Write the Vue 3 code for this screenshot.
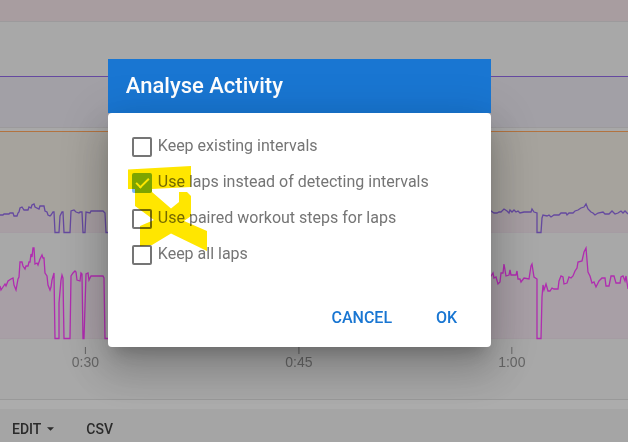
<template>
  <div class="page">
    <main class="charts">
      <svg class="plots" viewBox="0 0 628 345" preserveAspectRatio="none" aria-hidden="true">
        <rect class="band-rose" x="0" y="0" width="628" height="21" />
        <path class="rule" d="M0 21.5H628" />
        <rect class="band-lilac" x="0" y="77" width="628" height="50" />
        <path class="rule" d="M0 127.5H628" />
        <path class="line-purple" d="M0 76.5H628" />
        <rect class="band-sand" x="0" y="132" width="628" height="101" />
        <path class="line-orange" d="M0 131.5H628" />
        <path class="rule" d="M0 232.5H628M0 338.5H628" />
        <g v-for="line in lines" :key="line.name">
          <path class="area" :d="areaPath(line)" />
          <polyline :class="['trace', line.name]" :points="line.points" />
        </g>
      </svg>
      <svg class="axis">
        <g v-for="tick in ticks" :key="tick.label">
          <line :x1="tick.x" :x2="tick.x" y1="2" y2="9" />
          <text :x="tick.x" y="22">{{ tick.label }}</text>
        </g>
      </svg>
    </main>
    <footer class="toolbar">
      <button type="button">
        EDIT
        <svg class="caret" viewBox="0 0 8 4" aria-hidden="true"><path d="M0 0H8L4 4Z" /></svg>
      </button>
      <button type="button">CSV</button>
    </footer>

    <div v-if="open" class="overlay">
      <div class="dialog" role="dialog" aria-labelledby="dialog-title">
        <h1 id="dialog-title">Analyse Activity</h1>
        <form class="card" @submit.prevent="open = false">
          <label v-for="option in options" :key="option.label" class="option">
            <input v-model="option.checked" type="checkbox" />
            <span>{{ option.label }}</span>
          </label>
          <div class="actions">
            <button type="button" @click="open = false">CANCEL</button>
            <button type="submit">OK</button>
          </div>
          <svg class="marker" viewBox="128 166 80 86" aria-hidden="true">
            <path
              d="M128 169.5L191 166V187L152 189V192L171 208.5L179 202V192H187L191 196V216L184 221L207 231V251L171 233.5L152 245L140 246V226L154 220L135 206V189H128Z"
            />
          </svg>
        </form>
      </div>
    </div>
  </div>
</template>

<script setup>
import { ref } from 'vue'

const open = ref(true)

const options = ref([
  { label: 'Keep existing intervals', checked: false },
  { label: 'Use laps instead of detecting intervals', checked: true },
  { label: 'Use paired workout steps for laps', checked: false },
  { label: 'Keep all laps', checked: false }
])

const ticks = [
  { label: '0:30', x: '13.6%' },
  { label: '0:45', x: '47.6%' },
  { label: '1:00', x: '81.5%' }
]

const lines = [
  {
    name: 'power',
    base: 233,
    points:
      '0,215 3,215 4,214 9,214 10,213 13,213 14,216 17,216 18,213 19,212 20,208 22,207 24,210 28,210 29,207 31,208 32,205 34,204 35,207 39,209 40,206 44,206 45,211 47,212 48,215 50,216 51,215 53,212 54,212 55,232.5 59,232.5 60,216 62,212 63,212 64,232.5 70,232.5 71,211 74,210 76,212 79,213 80,212 82,212 83,232.5 85,232.5 86,212 90,213 91,211 103,211 105,213 106,232.5 108,232.5 300,212 491,211 494,213 497,213 499,212 501,212 504,209 507,211 509,213 510,210 512,212 514,210 516,212 518,211 520,213 524,212 531,212 532,209 534,212 537,213 537,232.5 541,232.5 542,218 543,215 547,216 549,215 551,217 554,215 559,215 561,213 566,213 567,215 569,213 573,213 575,211 578,210 581,208 584,207 586,204 588,209 591,212 593,213 595,215 598,213 603,212 605,214 609,214 612,211 615,214 618,213 621,211 623,213 625,211 628,214'
  },
  {
    name: 'heart',
    base: 339,
    points:
      '0,286 1,290 3,287 5,284 6,286 8,281 11,279 13,278 14,285 16,290 18,279 19,277 20,262 22,262 23,266 25,269 26,266 28,266 29,262 30,262 31,254 32,257 33,248 34,248 35,264 37,263 38,265 40,259 42,255 43,258 44,258 45,273 47,276 48,285 50,290 51,287 52,280 54,273 55,338.5 59,338.5 59,303 61,280 62,275 63,278 64,338.5 70,338.5 71,276 73,273 75,271 76,272 77,280 80,281 81,273 82,274 83,338.5 84,338.5 86,274 88,273 89,280 91,276 103,276 104,278 105,338.5 108,338.5 300,275 491,276 493,273 494,278 496,277 498,284 500,282 501,273 503,273 504,264 506,276 509,275 510,270 511,275 516,275 517,271 518,279 520,279 521,282 524,278 529,279 531,266 532,264 534,277 537,279 537,338.5 541,338.5 542,297 543,285 544,290 546,284 548,291 550,291 552,288 554,289 558,289 559,281 561,276 563,277 564,284 567,283 569,277 571,278 573,276 575,271 577,268 578,262 582,261 584,252 586,248 588,272 590,276 592,283 594,282 596,287 599,281 602,278 605,278 606,286 609,286 611,276 614,276 616,283 620,283 621,277 623,276 625,281 626,276 628,289'
  }
]

function areaPath(line) {
  return `M0 ${line.base}L${line.points} 628,${line.base}Z`
}
</script>

<style>
body {
  margin: 0;
}
</style>

<style scoped>
.page {
  position: relative;
  display: flex;
  flex-direction: column;
  min-height: 100vh;
  background: #acacac;
  font-family: Roboto, sans-serif;
}

.charts {
  background: #a8a8a8;
  border-bottom: 1px solid #999;
}

.plots {
  display: block;
  width: 100%;
  height: 345px;
}

.band-rose {
  fill: #a89da0;
}

.band-lilac {
  fill: #a2a0a6;
}

.band-sand {
  fill: #a6a39d;
}

.rule {
  stroke: #9c9a9c;
}

.line-purple {
  stroke: #6549a0;
}

.line-orange {
  stroke: #b27340;
}

.area {
  fill: #a89ca5;
  opacity: 0.8;
}

.trace {
  fill: none;
  stroke-width: 1.3;
}

.power {
  stroke: #6549a0;
}

.heart {
  stroke: #b02cb0;
}

.axis {
  display: block;
  width: 100%;
  height: 54px;
}

.axis line {
  stroke: #666;
}

.axis text {
  fill: #666;
  font-family: "Liberation Sans", Arial, sans-serif;
  font-size: 14px;
  text-anchor: middle;
}

.toolbar {
  display: flex;
  flex: 1;
  align-items: flex-end;
  gap: 32px;
  margin-top: 9px;
  padding: 12px 12px 5px;
  background: #a5a5a5;
}

.toolbar button {
  display: flex;
  align-items: center;
  gap: 6px;
  padding: 0;
  border: 0;
  background: none;
  color: #2b2b2b;
  font: 500 14px/16px Roboto, sans-serif;
}

.caret {
  width: 7px;
  height: 4px;
  fill: #2b2b2b;
}

.overlay {
  position: absolute;
  inset: 0;
  display: flex;
  justify-content: center;
  align-items: flex-start;
  padding: 59px 29px 0 0;
}

.dialog {
  width: 64%;
}

h1 {
  margin: 0;
  padding: 12px 18px;
  background: #1976d2;
  color: #fff;
  font-size: 22px;
  font-weight: 500;
  line-height: 30px;
}

.card {
  position: relative;
  display: flex;
  flex-direction: column;
  padding: 15px 26px 13px 24px;
  border-radius: 4px;
  background: #fff;
  box-shadow:
    0 11px 15px -7px rgba(0, 0, 0, 0.2),
    0 24px 38px 3px rgba(0, 0, 0, 0.14),
    0 9px 46px 8px rgba(0, 0, 0, 0.12);
}

.option {
  display: flex;
  align-items: center;
  gap: 6px;
  height: 36px;
  color: #757575;
  font-size: 16px;
  line-height: 20px;
}

.option input {
  appearance: none;
  box-sizing: border-box;
  width: 20px;
  height: 20px;
  margin: 2px 0 0;
  border: 2px solid #757575;
  border-radius: 2px;
  background: #fff;
}

.option input:checked {
  border-color: #7db6fa;
  background: #7db6fa;
}

.option input:checked::after {
  content: '';
  display: block;
  width: 5px;
  height: 11px;
  margin: 0 5px;
  border: solid #fff;
  border-width: 0 2px 2px 0;
  transform: rotate(45deg);
}

.actions {
  display: flex;
  justify-content: flex-end;
  gap: 28px;
  margin-top: 30px;
}

.actions button {
  padding: 8px;
  border: 0;
  background: none;
  color: #1976d2;
  font: 500 16px/16px Roboto, sans-serif;
}

.marker {
  position: absolute;
  top: 53px;
  left: 20px;
  width: 80px;
  height: 86px;
  fill: #ffe600;
  mix-blend-mode: multiply;
  pointer-events: none;
}
</style>
